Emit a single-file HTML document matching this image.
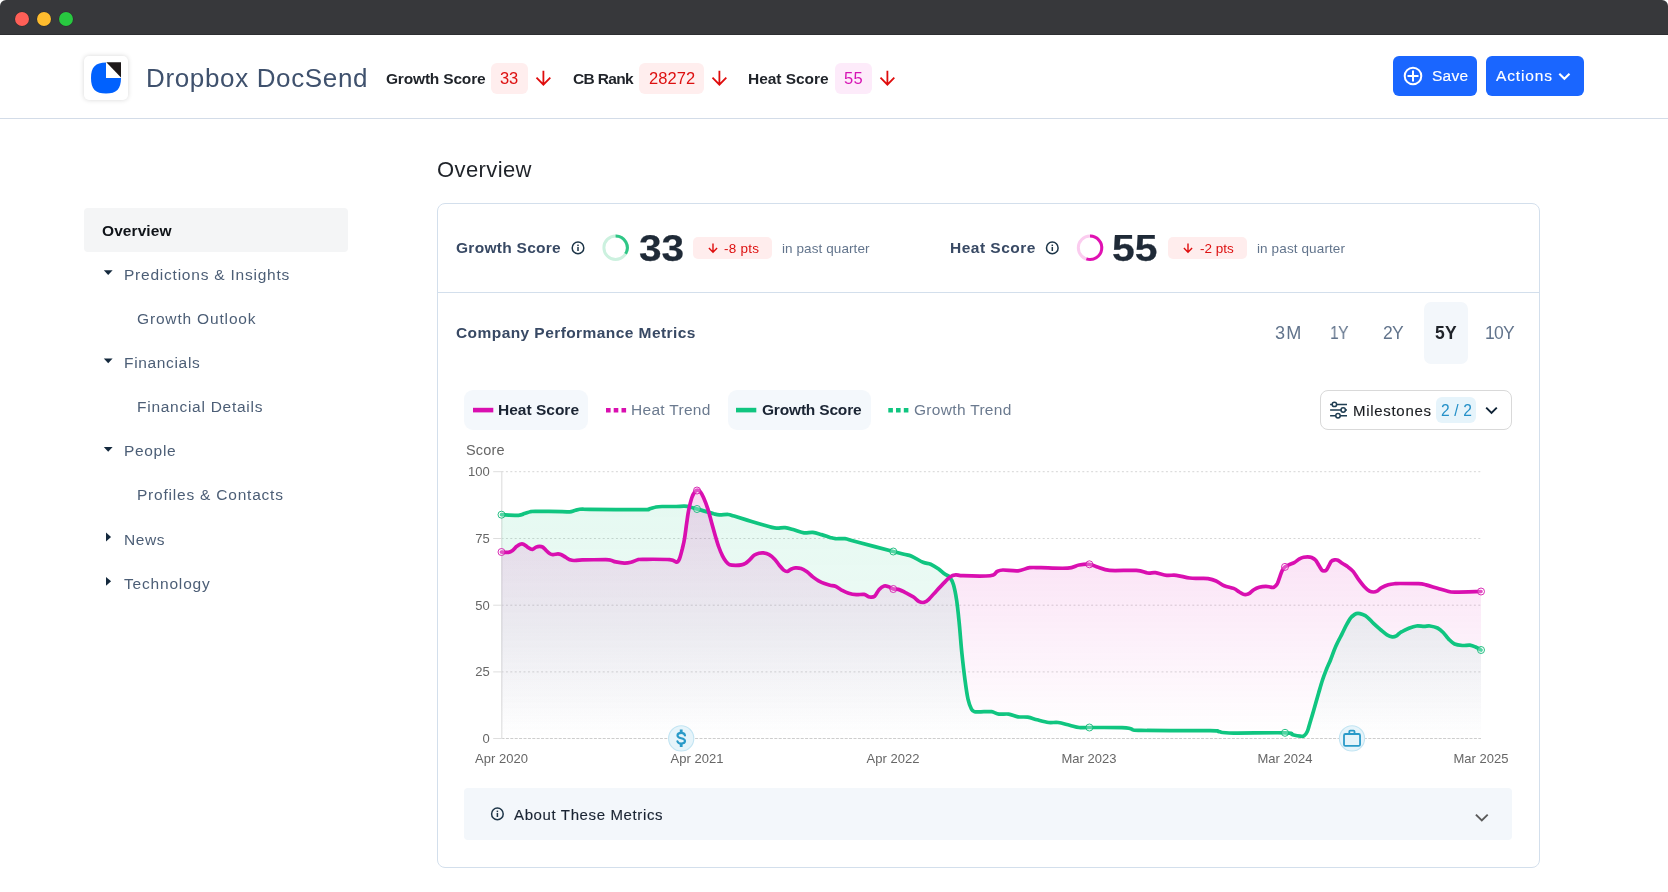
<!DOCTYPE html>
<html lang="en"><head><meta charset="utf-8"><title>Dropbox DocSend - Overview</title>
<style>
*{box-sizing:border-box;margin:0;padding:0}
html,body{width:1668px;height:892px;overflow:hidden;background:#fff}
body{position:relative;font-family:"Liberation Sans",sans-serif;color:#1f2329}
.abs{position:absolute}
.t{position:absolute;white-space:nowrap;font-family:"Liberation Sans",sans-serif;transform-origin:0 50%}
#titlebar{left:0;top:0;width:1668px;height:35px;background:#37383b;border-radius:6px 6px 0 0;border-bottom:1px solid #2d2e31}
.tl{width:14px;height:14px;border-radius:50%;top:11.5px;box-shadow:0 0 0 .5px rgba(0,0,0,.25)}
#hdrline{left:0;top:118px;width:1668px;height:1px;background:#d3dce8}
#logo{left:84px;top:56px;width:44px;height:44px;background:#fff;border-radius:5px;box-shadow:0 0 5px rgba(0,0,0,.16)}
.badge{border-radius:6px;height:31.4px;top:62.5px}
.btn{background:#1a66ff;border-radius:6px;top:56px;height:40px}
#navsel{left:84px;top:208px;width:264px;height:44px;background:#f4f5f6;border-radius:4px}
#card{left:437px;top:203px;width:1103px;height:665px;border:1px solid #d3dfec;border-radius:8px;background:#fff}
#carddiv{left:438px;top:292px;width:1101px;height:1px;background:#d3dfec}
.pts{background:#ffeded;border-radius:5px;top:237px;height:22px;width:79px}
#tabsel{left:1424px;top:302px;width:44px;height:62px;background:#f3f7fb;border-radius:7px}
.chip{background:#f4f8fc;border-radius:9px;top:390px;height:40px}
#miles{left:1320px;top:390px;width:192px;height:40px;border:1px solid #d9d9d9;border-radius:8px;background:#fff}
#mbadge{left:1436px;top:397px;width:40px;height:26px;background:#e6f4fb;border-radius:6px}
#about{left:464px;top:788px;width:1048px;height:52px;background:#f3f7fb;border-radius:4px}
svg{position:absolute;overflow:visible;will-change:transform}
svg.ov,#chart{left:0;top:0;pointer-events:none}
.t{will-change:transform}
</style></head>
<body>
<header>
<div class="abs" id="titlebar"></div>
<div class="abs tl" style="left:15px;background:#fe5f57"></div>
<div class="abs tl" style="left:37px;background:#febc2e"></div>
<div class="abs tl" style="left:59px;background:#28c840"></div>
<div class="abs" id="hdrline"></div>
<div class="abs" id="logo"></div>
<svg style="left:91px;top:62px" width="30" height="32" viewBox="0 0 30 32"><path d="M15 0.5 C4.5 0.5 0 5 0 16 C0 27 4.5 31.5 15 31.5 C25.5 31.5 30 27 30 16 L15 16 Z" fill="#0061fe"/><path d="M15.3 0.3 L30 0.3 L30 15.6 Z" fill="#1e1919"/></svg>
<div class="abs badge" style="left:491px;width:37px;background:#ffeeee"></div>
<div class="abs badge" style="left:639.3px;width:64.7px;background:#ffeeee"></div>
<div class="abs badge" style="left:835px;width:36.5px;background:#fdebfa"></div>
<div class="abs btn" style="left:1393px;width:84px"></div>
<div class="abs btn" style="left:1486px;width:98px"></div>
<svg class="ov" id="icons-header" width="1668" height="892" viewBox="0 0 1668 892" aria-hidden="true"><!-- header red arrows -->
<g fill="none" stroke="#df0c0c" stroke-width="1.8">
<path d="M543.4 70.7V84.6M536.5 77.6L543.4 84.6L550.3 77.6"/>
<path d="M719.4 70.7V84.6M712.5 77.6L719.4 84.6L726.3 77.6"/>
<path d="M887.4 70.7V84.6M880.5 77.6L887.4 84.6L894.3 77.6"/>
</g>
<!-- save plus-circle -->
<g fill="none" stroke="#fff" stroke-width="2">
<circle cx="1413" cy="76" r="8.3"/>
<path d="M1407.5 76H1418.5M1413 70.5V81.5"/>
<path d="M1559.3 73.8L1564.4 78.8L1569.5 73.8" stroke-width="2.1"/>
</g>
</svg>
<span class="t" id="t0" style="left:145.90px;top:62.19px;font-size:26px;line-height:32px;font-weight:400;color:#3f516d;letter-spacing:0.643px">Dropbox DocSend</span>
<span class="t" id="t1" style="left:386.00px;top:69.13px;font-size:15.5px;line-height:19px;font-weight:700;color:#1f2329;letter-spacing:-0.183px">Growth Score</span>
<span class="t" id="t2" style="left:500.40px;top:67.78px;font-size:16.5px;line-height:21px;font-weight:400;color:#dd1010;letter-spacing:-0.077px">33</span>
<span class="t" id="t3" style="left:573.00px;top:69.13px;font-size:15.5px;line-height:19px;font-weight:700;color:#1f2329;letter-spacing:-0.663px">CB Rank</span>
<span class="t" id="t4" style="left:648.70px;top:67.78px;font-size:16.5px;line-height:21px;font-weight:400;color:#dd1010;letter-spacing:0.048px">28272</span>
<span class="t" id="t5" style="left:748.00px;top:69.13px;font-size:15.5px;line-height:19px;font-weight:700;color:#1f2329;letter-spacing:-0.040px">Heat Score</span>
<span class="t" id="t6" style="left:844.00px;top:67.78px;font-size:16.5px;line-height:21px;font-weight:400;color:#d614b4;letter-spacing:0.323px">55</span>
<span class="t" id="t7" style="left:1431.80px;top:66.13px;font-size:15.5px;line-height:19px;font-weight:400;color:#ffffff;letter-spacing:0.264px;-webkit-text-stroke:0.15px #ffffff">Save</span>
<span class="t" id="t8" style="left:1496.00px;top:66.13px;font-size:15.5px;line-height:19px;font-weight:400;color:#ffffff;letter-spacing:0.853px;-webkit-text-stroke:0.15px #ffffff">Actions</span>
</header>
<nav>
<div class="abs" id="navsel"></div>
<svg class="ov" id="icons-nav" width="1668" height="892" viewBox="0 0 1668 892" aria-hidden="true"><!-- sidebar carets -->
<g fill="#14293d">
<path d="M103.8 270.2h8.8l-4.4 4.8z"/>
<path d="M103.8 358.5h8.8l-4.4 4.8z"/>
<path d="M103.8 446.9h8.8l-4.4 4.8z"/>
<path d="M106 532.6v8.8l5.1-4.4z"/>
<path d="M106 576.9v8.8l5.1-4.4z"/>
</g>
</svg>
<span class="t" id="t9" style="left:102.00px;top:220.93px;font-size:15.5px;line-height:19px;font-weight:700;color:#0f1318;letter-spacing:0.075px">Overview</span>
<span class="t" id="t10" style="left:124.00px;top:265.13px;font-size:15.5px;line-height:19px;font-weight:400;color:#4c5e76;letter-spacing:0.772px">Predictions &amp; Insights</span>
<span class="t" id="t11" style="left:137.20px;top:309.13px;font-size:15.5px;line-height:19px;font-weight:400;color:#4c5e76;letter-spacing:0.836px">Growth Outlook</span>
<span class="t" id="t12" style="left:124.00px;top:353.13px;font-size:15.5px;line-height:19px;font-weight:400;color:#4c5e76;letter-spacing:0.663px">Financials</span>
<span class="t" id="t13" style="left:136.80px;top:397.13px;font-size:15.5px;line-height:19px;font-weight:400;color:#4c5e76;letter-spacing:0.733px">Financial Details</span>
<span class="t" id="t14" style="left:124.00px;top:441.13px;font-size:15.5px;line-height:19px;font-weight:400;color:#4c5e76;letter-spacing:0.671px">People</span>
<span class="t" id="t15" style="left:136.80px;top:485.13px;font-size:15.5px;line-height:19px;font-weight:400;color:#4c5e76;letter-spacing:0.786px">Profiles &amp; Contacts</span>
<span class="t" id="t16" style="left:123.80px;top:529.63px;font-size:15.5px;line-height:19px;font-weight:400;color:#4c5e76;letter-spacing:0.564px">News</span>
<span class="t" id="t17" style="left:124.00px;top:573.63px;font-size:15.5px;line-height:19px;font-weight:400;color:#4c5e76;letter-spacing:0.815px">Technology</span>
</nav>
<main>
<span class="t" id="t18" style="left:436.80px;top:155.58px;font-size:22px;line-height:28px;font-weight:400;color:#1f2329;letter-spacing:0.400px">Overview</span>
<section>
<div class="abs" id="card"></div>
<div class="abs" id="carddiv"></div>
<div class="abs pts" style="left:693px"></div>
<div class="abs pts" style="left:1168px"></div>
<div class="abs" id="tabsel"></div>
<div class="abs chip" style="left:464px;width:124px"></div>
<div class="abs chip" style="left:728px;width:143px"></div>
<div class="abs" id="miles"></div>
<div class="abs" id="mbadge"></div>
<div class="abs" id="about"></div>
<svg id="chart" width="1668" height="892" viewBox="0 0 1668 892">
<defs>
<linearGradient id="gg" gradientUnits="userSpaceOnUse" x1="0" y1="500" x2="0" y2="738"><stop offset="0" stop-color="#0fc57e" stop-opacity=".108"/><stop offset=".55" stop-color="#0fc57e" stop-opacity=".076"/><stop offset="1" stop-color="#0fc57e" stop-opacity="0"/></linearGradient>
<linearGradient id="hg" gradientUnits="userSpaceOnUse" x1="0" y1="490" x2="0" y2="738"><stop offset="0" stop-color="#d80fae" stop-opacity=".155"/><stop offset="1" stop-color="#d80fae" stop-opacity="0"/></linearGradient>
</defs>
<line x1="501.5" y1="471.7" x2="1481" y2="471.7" stroke="#d6d6d6" stroke-width="1" stroke-dasharray="2 2.4"/>
<line x1="493.2" y1="471.7" x2="502.3" y2="471.7" stroke="#dedede" stroke-width="1"/>
<line x1="501.5" y1="538.5" x2="1481" y2="538.5" stroke="#d6d6d6" stroke-width="1" stroke-dasharray="2 2.4"/>
<line x1="493.2" y1="538.5" x2="502.3" y2="538.5" stroke="#dedede" stroke-width="1"/>
<line x1="501.5" y1="605.2" x2="1481" y2="605.2" stroke="#d6d6d6" stroke-width="1" stroke-dasharray="2 2.4"/>
<line x1="493.2" y1="605.2" x2="502.3" y2="605.2" stroke="#dedede" stroke-width="1"/>
<line x1="501.5" y1="671.9" x2="1481" y2="671.9" stroke="#d6d6d6" stroke-width="1" stroke-dasharray="2 2.4"/>
<line x1="493.2" y1="671.9" x2="502.3" y2="671.9" stroke="#dedede" stroke-width="1"/>
<line x1="501.5" y1="738.5" x2="1481" y2="738.5" stroke="#cdcdcd" stroke-width="1" stroke-dasharray="3 1.4"/>
<line x1="493.2" y1="738.5" x2="502.3" y2="738.5" stroke="#dedede" stroke-width="1"/>
<line x1="501.8" y1="471.2" x2="501.8" y2="739" stroke="#e0e0e0" stroke-width="1.2"/>
<path d="M501.5 514.7C504.3 514.8 514.7 515.5 518.5 515.3C522.3 515.1 522.4 514.2 524.4 513.6C526.4 513.0 528.5 512.1 530.3 511.7C532.1 511.3 530.0 511.3 535.3 511.3C540.6 511.3 556.4 511.5 562.1 511.6C567.8 511.7 567.5 512.0 569.7 511.8C572.0 511.6 573.5 510.7 575.6 510.2C577.7 509.7 580.1 509.1 582.3 509.0C584.5 508.9 578.9 509.3 589.0 509.4C599.1 509.5 632.6 509.8 642.7 509.7C652.8 509.6 647.2 509.3 649.4 508.9C651.6 508.4 653.9 507.4 656.1 507.0C658.4 506.6 659.5 506.6 662.9 506.5C666.3 506.4 672.7 506.6 676.3 506.5C679.9 506.4 682.3 506.1 684.6 506.2C686.9 506.3 687.9 506.5 690.0 507.0C692.1 507.5 693.5 508.0 697.5 509.1C701.5 510.2 710.0 512.8 713.7 513.8C717.4 514.8 717.1 514.8 719.5 514.9C721.9 515.0 725.9 514.3 728.3 514.5C730.7 514.7 730.2 514.9 734.1 516.1C738.0 517.3 745.3 519.6 751.6 521.5C757.9 523.4 767.6 526.3 772.0 527.4C776.4 528.5 775.6 528.1 777.8 528.1C780.0 528.1 782.4 527.3 785.1 527.6C787.8 527.9 790.7 528.9 793.9 529.8C797.1 530.7 801.0 532.4 804.1 532.8C807.2 533.2 809.9 532.1 812.8 532.4C815.7 532.7 818.7 533.8 821.6 534.6C824.5 535.4 827.7 536.7 830.0 537.4C832.3 538.1 832.9 538.5 835.4 538.7C837.9 538.9 841.4 538.2 844.9 538.7C848.4 539.2 848.2 539.7 856.3 541.8C864.4 543.9 885.3 549.4 893.3 551.5C901.2 553.6 901.0 553.5 904.0 554.3C907.0 555.1 908.4 554.9 911.6 556.2C914.8 557.5 919.8 561.0 923.0 562.3C926.2 563.6 928.2 563.1 930.7 564.2C933.2 565.3 935.9 567.1 938.3 568.8C940.6 570.4 942.9 572.7 944.8 574.1C946.7 575.5 948.2 575.4 949.7 577.2C951.2 579.0 952.4 581.0 953.5 584.8C954.6 588.6 955.6 593.6 956.6 600.0C957.6 606.4 958.3 614.0 959.2 622.9C960.1 631.8 960.9 643.9 961.9 653.4C962.9 662.9 964.0 672.5 965.0 680.1C966.0 687.7 966.9 694.3 968.0 699.1C969.1 703.9 970.3 706.9 971.4 709.0C972.5 711.1 972.4 711.2 974.5 711.7C976.6 712.2 981.1 711.7 984.0 711.7C986.9 711.7 989.1 711.3 991.6 711.7C994.1 712.1 996.2 713.7 999.0 714.1C1001.8 714.5 1005.4 713.7 1008.6 714.1C1011.8 714.5 1014.9 716.3 1018.1 716.8C1021.3 717.3 1024.5 716.7 1027.7 717.2C1030.9 717.7 1033.7 718.9 1037.2 719.8C1040.7 720.7 1045.1 722.0 1048.6 722.5C1052.1 723.0 1054.7 722.0 1058.2 722.5C1061.7 723.0 1066.1 724.4 1069.6 725.2C1073.1 726.0 1075.8 727.1 1079.1 727.5C1082.4 727.9 1082.2 727.5 1089.4 727.5C1096.6 727.5 1115.1 727.4 1122.0 727.6C1128.9 727.8 1127.8 728.3 1131.0 728.8C1134.2 729.3 1127.8 730.1 1141.0 730.4C1154.2 730.7 1197.0 730.4 1210.0 730.6C1223.0 730.8 1215.8 731.2 1219.0 731.6C1222.2 732.0 1218.0 732.8 1229.0 733.0C1240.0 733.2 1274.4 732.5 1285.0 732.8C1295.6 733.1 1290.0 734.1 1292.6 734.7C1295.1 735.3 1298.4 736.0 1300.3 736.2C1302.2 736.4 1302.9 736.6 1304.1 735.8C1305.3 735.0 1306.4 733.4 1307.3 731.5C1308.2 729.6 1308.5 727.8 1309.5 724.4C1310.5 721.0 1312.0 716.3 1313.5 711.0C1315.0 705.7 1317.2 698.0 1318.7 692.8C1320.2 687.6 1321.2 684.0 1322.5 680.0C1323.8 676.0 1325.3 672.3 1326.6 669.0C1327.9 665.7 1329.0 663.8 1330.5 660.0C1332.0 656.2 1333.9 650.6 1335.8 646.3C1337.7 642.0 1340.1 637.7 1341.9 634.1C1343.7 630.5 1345.1 627.4 1346.6 624.7C1348.0 622.0 1349.2 619.7 1350.6 618.0C1351.9 616.3 1353.5 615.2 1354.7 614.4C1355.9 613.6 1356.7 613.4 1358.0 613.4C1359.3 613.4 1361.1 614.0 1362.7 614.6C1364.3 615.2 1365.7 615.8 1367.5 617.3C1369.3 618.8 1371.4 621.4 1373.5 623.4C1375.6 625.4 1378.0 627.5 1380.2 629.4C1382.5 631.3 1385.0 633.6 1387.0 634.8C1389.0 636.0 1390.7 636.6 1392.3 636.8C1393.9 637.0 1395.1 636.5 1396.4 635.8C1397.7 635.1 1397.9 634.0 1400.0 632.8C1402.1 631.5 1406.2 629.4 1408.9 628.3C1411.7 627.2 1414.0 626.3 1416.5 626.0C1419.0 625.7 1421.9 626.4 1424.1 626.4C1426.3 626.4 1427.7 625.7 1429.9 626.0C1432.1 626.3 1435.3 626.9 1437.5 628.0C1439.7 629.1 1441.3 630.6 1443.2 632.5C1445.1 634.4 1447.0 637.5 1448.9 639.4C1450.8 641.3 1452.4 643.0 1454.6 644.0C1456.8 645.0 1459.8 645.3 1462.3 645.5C1464.8 645.7 1467.7 644.9 1469.9 645.1C1472.1 645.4 1473.8 646.2 1475.6 647.0C1477.4 647.8 1480.1 649.5 1481.0 650.0L1481 738L501.5 738Z" fill="url(#gg)"/>
<path d="M501.5 552.0C502.6 552.1 506.5 552.6 508.4 552.4C510.2 552.1 511.2 551.5 512.6 550.5C514.0 549.5 515.5 547.3 516.8 546.3C518.1 545.2 519.1 544.6 520.2 544.2C521.3 543.9 522.4 543.8 523.5 544.2C524.6 544.6 525.8 545.8 526.9 546.6C528.0 547.4 529.3 548.4 530.3 548.8C531.3 549.2 531.8 549.5 532.8 549.2C533.8 548.9 535.0 547.6 536.1 547.1C537.2 546.6 538.4 546.3 539.5 546.3C540.6 546.3 541.7 546.4 542.8 547.1C543.9 547.8 545.1 549.4 546.2 550.5C547.3 551.6 548.5 552.8 549.6 553.5C550.7 554.2 551.5 554.6 552.9 554.7C554.3 554.8 556.6 553.9 558.0 553.9C559.4 553.9 560.0 554.2 561.3 554.7C562.5 555.2 564.1 556.4 565.5 557.2C566.9 558.0 568.3 559.2 569.7 559.7C571.1 560.2 571.8 560.5 573.9 560.5C576.0 560.5 577.0 560.0 582.3 559.9C587.6 559.8 601.0 559.7 605.8 559.7C610.5 559.8 609.1 559.8 610.8 560.2C612.5 560.6 613.6 561.4 615.9 561.9C618.1 562.4 621.8 563.0 624.3 563.1C626.8 563.2 628.8 562.8 631.0 562.3C633.2 561.8 635.8 560.3 637.7 559.8C639.7 559.3 637.4 559.3 642.7 559.3C648.0 559.3 664.0 559.1 669.6 559.6C675.2 560.1 675.0 562.2 676.6 562.1C678.2 562.0 678.5 561.0 679.5 558.7C680.5 556.4 681.5 551.9 682.4 548.5C683.2 545.1 683.9 542.7 684.6 538.3C685.3 533.9 686.1 527.2 686.8 522.3C687.5 517.4 688.0 513.2 688.9 509.1C689.8 505.0 690.9 500.4 691.9 497.5C692.9 494.6 693.9 493.1 694.8 491.9C695.7 490.7 696.6 490.2 697.5 490.2C698.4 490.2 699.4 490.7 700.4 491.9C701.4 493.1 702.2 494.6 703.5 497.5C704.8 500.4 706.6 505.0 707.9 509.1C709.2 513.2 710.3 517.9 711.5 522.3C712.7 526.7 714.0 531.3 715.2 535.4C716.4 539.5 717.6 543.6 718.8 547.0C720.0 550.4 721.3 553.4 722.5 555.8C723.7 558.2 724.9 560.1 726.1 561.6C727.3 563.1 728.1 564.2 729.7 564.8C731.3 565.4 733.7 565.4 735.6 565.4C737.5 565.4 739.7 565.3 741.4 564.9C743.1 564.5 744.3 564.0 745.8 563.1C747.2 562.2 748.6 560.8 750.1 559.4C751.6 558.0 753.0 556.0 754.5 555.0C756.0 554.0 757.4 553.6 758.9 553.2C760.4 552.9 761.6 552.7 763.3 552.9C765.0 553.1 767.2 553.5 769.1 554.6C771.0 555.7 773.2 557.6 774.9 559.4C776.6 561.2 777.8 563.4 779.3 565.2C780.8 567.0 782.4 569.1 783.7 570.1C785.0 571.1 786.1 571.6 787.3 571.5C788.5 571.4 789.7 569.8 791.0 569.2C792.3 568.6 793.6 568.0 795.3 567.9C797.0 567.8 799.1 567.9 801.1 568.5C803.1 569.1 805.0 570.4 807.0 571.8C809.0 573.2 810.9 575.4 812.8 576.9C814.7 578.4 816.6 579.7 818.6 580.8C820.6 581.9 822.6 582.8 824.5 583.5C826.4 584.2 828.2 584.7 830.0 585.2C831.8 585.7 833.5 585.5 835.4 586.3C837.2 587.1 838.9 588.6 841.1 589.8C843.3 590.9 846.2 592.4 848.7 593.2C851.2 594.0 853.8 594.5 856.3 594.7C858.8 594.9 861.8 594.0 864.0 594.4C866.2 594.8 867.9 596.7 869.7 597.0C871.5 597.3 873.0 597.6 874.6 596.3C876.2 595.0 877.6 591.1 879.2 589.4C880.8 587.7 882.6 586.5 884.2 586.0C885.8 585.5 887.2 586.2 888.7 586.7C890.2 587.2 891.7 588.5 893.3 589.0C894.9 589.5 896.2 588.8 898.3 589.4C900.4 590.0 903.4 591.5 905.9 592.8C908.4 594.1 911.3 595.5 913.5 597.0C915.7 598.5 917.4 600.7 919.2 601.6C921.0 602.5 922.6 602.7 924.2 602.3C925.8 601.9 926.8 601.2 928.8 599.3C930.8 597.4 933.9 593.6 936.4 590.9C938.9 588.2 941.8 585.2 944.0 582.9C946.2 580.6 947.8 578.5 949.7 577.2C951.6 575.9 953.2 575.1 955.4 574.9C957.6 574.6 957.9 575.5 963.0 575.7C968.1 575.9 980.8 576.1 985.9 576.0C991.0 575.9 991.6 575.6 993.5 574.9C995.4 574.1 995.6 572.3 997.2 571.5C998.8 570.7 999.4 570.1 1002.9 570.0C1006.4 569.9 1013.7 571.2 1018.1 570.8C1022.5 570.4 1025.8 568.2 1029.6 567.7C1033.4 567.2 1034.7 567.6 1041.0 567.7C1047.3 567.8 1061.4 568.6 1067.7 568.1C1074.0 567.6 1075.5 565.6 1079.1 565.0C1082.7 564.4 1086.2 563.9 1089.4 564.3C1092.6 564.7 1094.8 566.3 1098.2 567.3C1101.6 568.3 1103.2 569.9 1109.6 570.4C1115.9 570.9 1129.9 570.0 1136.3 570.4C1142.7 570.8 1144.5 572.6 1147.7 573.0C1150.9 573.4 1152.2 572.3 1155.4 572.7C1158.6 573.1 1163.3 574.9 1166.8 575.3C1170.3 575.7 1172.5 574.8 1176.3 575.3C1180.1 575.8 1185.8 577.5 1189.7 578.0C1193.7 578.5 1196.9 578.2 1200.0 578.3C1203.1 578.4 1205.4 578.1 1208.1 578.6C1210.8 579.1 1213.4 579.8 1216.1 581.0C1218.8 582.2 1221.3 584.5 1224.2 585.7C1227.1 586.9 1231.1 587.4 1233.6 588.4C1236.1 589.4 1237.4 590.8 1239.0 591.8C1240.6 592.8 1241.8 593.6 1243.0 594.1C1244.2 594.6 1245.3 594.7 1246.4 594.5C1247.5 594.3 1248.6 593.9 1249.8 593.1C1251.0 592.3 1252.2 590.8 1253.8 589.8C1255.4 588.8 1257.2 587.9 1259.2 587.3C1261.2 586.7 1264.0 586.4 1265.9 586.4C1267.8 586.4 1269.3 587.0 1270.6 587.1C1271.9 587.2 1272.6 587.9 1273.7 587.3C1274.8 586.7 1276.2 585.5 1277.3 583.7C1278.3 581.9 1279.2 578.5 1280.0 576.3C1280.8 574.1 1281.5 571.9 1282.3 570.3C1283.1 568.7 1283.9 567.8 1285.0 566.9C1286.1 566.0 1287.3 565.6 1288.8 564.9C1290.3 564.2 1292.4 563.6 1294.2 562.6C1296.0 561.6 1297.9 559.7 1299.5 558.8C1301.1 557.9 1302.2 557.5 1303.6 557.2C1304.9 556.9 1306.3 556.8 1307.6 556.8C1308.9 556.8 1310.2 556.9 1311.6 557.5C1312.9 558.1 1314.5 558.9 1315.7 560.2C1316.9 561.6 1318.0 564.0 1319.0 565.6C1320.0 567.2 1320.9 569.0 1321.7 569.9C1322.5 570.8 1323.2 570.9 1324.0 570.9C1324.8 570.9 1325.6 570.8 1326.4 569.9C1327.2 569.0 1328.1 567.0 1328.9 565.6C1329.7 564.2 1330.2 562.5 1331.1 561.5C1332.0 560.5 1333.4 560.1 1334.5 559.9C1335.6 559.7 1336.6 559.6 1337.9 560.2C1339.2 560.8 1340.9 562.4 1342.6 563.5C1344.3 564.6 1346.2 565.5 1348.0 566.9C1349.8 568.2 1351.5 569.5 1353.3 571.6C1355.1 573.7 1356.9 577.2 1358.7 579.7C1360.5 582.2 1362.3 584.5 1364.1 586.4C1365.9 588.3 1367.9 590.2 1369.5 591.1C1371.1 592.0 1372.2 592.0 1373.5 592.0C1374.8 592.0 1376.2 591.5 1377.5 590.8C1378.8 590.1 1379.8 588.7 1381.6 587.7C1383.4 586.7 1386.1 585.5 1388.3 584.8C1390.5 584.1 1393.0 583.9 1395.0 583.7C1397.0 583.5 1396.1 583.5 1400.0 583.5C1403.9 583.5 1414.1 583.5 1418.4 583.7C1422.7 583.9 1422.8 584.1 1426.0 584.9C1429.2 585.7 1434.0 587.3 1437.5 588.3C1441.0 589.3 1444.2 590.4 1447.0 591.0C1449.8 591.6 1448.9 592.0 1454.6 592.1C1460.3 592.2 1476.6 591.6 1481.0 591.5L1481 738L501.5 738Z" fill="url(#hg)"/>
<path d="M501.5 514.7C504.3 514.8 514.7 515.5 518.5 515.3C522.3 515.1 522.4 514.2 524.4 513.6C526.4 513.0 528.5 512.1 530.3 511.7C532.1 511.3 530.0 511.3 535.3 511.3C540.6 511.3 556.4 511.5 562.1 511.6C567.8 511.7 567.5 512.0 569.7 511.8C572.0 511.6 573.5 510.7 575.6 510.2C577.7 509.7 580.1 509.1 582.3 509.0C584.5 508.9 578.9 509.3 589.0 509.4C599.1 509.5 632.6 509.8 642.7 509.7C652.8 509.6 647.2 509.3 649.4 508.9C651.6 508.4 653.9 507.4 656.1 507.0C658.4 506.6 659.5 506.6 662.9 506.5C666.3 506.4 672.7 506.6 676.3 506.5C679.9 506.4 682.3 506.1 684.6 506.2C686.9 506.3 687.9 506.5 690.0 507.0C692.1 507.5 693.5 508.0 697.5 509.1C701.5 510.2 710.0 512.8 713.7 513.8C717.4 514.8 717.1 514.8 719.5 514.9C721.9 515.0 725.9 514.3 728.3 514.5C730.7 514.7 730.2 514.9 734.1 516.1C738.0 517.3 745.3 519.6 751.6 521.5C757.9 523.4 767.6 526.3 772.0 527.4C776.4 528.5 775.6 528.1 777.8 528.1C780.0 528.1 782.4 527.3 785.1 527.6C787.8 527.9 790.7 528.9 793.9 529.8C797.1 530.7 801.0 532.4 804.1 532.8C807.2 533.2 809.9 532.1 812.8 532.4C815.7 532.7 818.7 533.8 821.6 534.6C824.5 535.4 827.7 536.7 830.0 537.4C832.3 538.1 832.9 538.5 835.4 538.7C837.9 538.9 841.4 538.2 844.9 538.7C848.4 539.2 848.2 539.7 856.3 541.8C864.4 543.9 885.3 549.4 893.3 551.5C901.2 553.6 901.0 553.5 904.0 554.3C907.0 555.1 908.4 554.9 911.6 556.2C914.8 557.5 919.8 561.0 923.0 562.3C926.2 563.6 928.2 563.1 930.7 564.2C933.2 565.3 935.9 567.1 938.3 568.8C940.6 570.4 942.9 572.7 944.8 574.1C946.7 575.5 948.2 575.4 949.7 577.2C951.2 579.0 952.4 581.0 953.5 584.8C954.6 588.6 955.6 593.6 956.6 600.0C957.6 606.4 958.3 614.0 959.2 622.9C960.1 631.8 960.9 643.9 961.9 653.4C962.9 662.9 964.0 672.5 965.0 680.1C966.0 687.7 966.9 694.3 968.0 699.1C969.1 703.9 970.3 706.9 971.4 709.0C972.5 711.1 972.4 711.2 974.5 711.7C976.6 712.2 981.1 711.7 984.0 711.7C986.9 711.7 989.1 711.3 991.6 711.7C994.1 712.1 996.2 713.7 999.0 714.1C1001.8 714.5 1005.4 713.7 1008.6 714.1C1011.8 714.5 1014.9 716.3 1018.1 716.8C1021.3 717.3 1024.5 716.7 1027.7 717.2C1030.9 717.7 1033.7 718.9 1037.2 719.8C1040.7 720.7 1045.1 722.0 1048.6 722.5C1052.1 723.0 1054.7 722.0 1058.2 722.5C1061.7 723.0 1066.1 724.4 1069.6 725.2C1073.1 726.0 1075.8 727.1 1079.1 727.5C1082.4 727.9 1082.2 727.5 1089.4 727.5C1096.6 727.5 1115.1 727.4 1122.0 727.6C1128.9 727.8 1127.8 728.3 1131.0 728.8C1134.2 729.3 1127.8 730.1 1141.0 730.4C1154.2 730.7 1197.0 730.4 1210.0 730.6C1223.0 730.8 1215.8 731.2 1219.0 731.6C1222.2 732.0 1218.0 732.8 1229.0 733.0C1240.0 733.2 1274.4 732.5 1285.0 732.8C1295.6 733.1 1290.0 734.1 1292.6 734.7C1295.1 735.3 1298.4 736.0 1300.3 736.2C1302.2 736.4 1302.9 736.6 1304.1 735.8C1305.3 735.0 1306.4 733.4 1307.3 731.5C1308.2 729.6 1308.5 727.8 1309.5 724.4C1310.5 721.0 1312.0 716.3 1313.5 711.0C1315.0 705.7 1317.2 698.0 1318.7 692.8C1320.2 687.6 1321.2 684.0 1322.5 680.0C1323.8 676.0 1325.3 672.3 1326.6 669.0C1327.9 665.7 1329.0 663.8 1330.5 660.0C1332.0 656.2 1333.9 650.6 1335.8 646.3C1337.7 642.0 1340.1 637.7 1341.9 634.1C1343.7 630.5 1345.1 627.4 1346.6 624.7C1348.0 622.0 1349.2 619.7 1350.6 618.0C1351.9 616.3 1353.5 615.2 1354.7 614.4C1355.9 613.6 1356.7 613.4 1358.0 613.4C1359.3 613.4 1361.1 614.0 1362.7 614.6C1364.3 615.2 1365.7 615.8 1367.5 617.3C1369.3 618.8 1371.4 621.4 1373.5 623.4C1375.6 625.4 1378.0 627.5 1380.2 629.4C1382.5 631.3 1385.0 633.6 1387.0 634.8C1389.0 636.0 1390.7 636.6 1392.3 636.8C1393.9 637.0 1395.1 636.5 1396.4 635.8C1397.7 635.1 1397.9 634.0 1400.0 632.8C1402.1 631.5 1406.2 629.4 1408.9 628.3C1411.7 627.2 1414.0 626.3 1416.5 626.0C1419.0 625.7 1421.9 626.4 1424.1 626.4C1426.3 626.4 1427.7 625.7 1429.9 626.0C1432.1 626.3 1435.3 626.9 1437.5 628.0C1439.7 629.1 1441.3 630.6 1443.2 632.5C1445.1 634.4 1447.0 637.5 1448.9 639.4C1450.8 641.3 1452.4 643.0 1454.6 644.0C1456.8 645.0 1459.8 645.3 1462.3 645.5C1464.8 645.7 1467.7 644.9 1469.9 645.1C1472.1 645.4 1473.8 646.2 1475.6 647.0C1477.4 647.8 1480.1 649.5 1481.0 650.0" fill="none" stroke="#10c580" stroke-width="3.7" stroke-linejoin="round" stroke-linecap="round"/>
<path d="M501.5 552.0C502.6 552.1 506.5 552.6 508.4 552.4C510.2 552.1 511.2 551.5 512.6 550.5C514.0 549.5 515.5 547.3 516.8 546.3C518.1 545.2 519.1 544.6 520.2 544.2C521.3 543.9 522.4 543.8 523.5 544.2C524.6 544.6 525.8 545.8 526.9 546.6C528.0 547.4 529.3 548.4 530.3 548.8C531.3 549.2 531.8 549.5 532.8 549.2C533.8 548.9 535.0 547.6 536.1 547.1C537.2 546.6 538.4 546.3 539.5 546.3C540.6 546.3 541.7 546.4 542.8 547.1C543.9 547.8 545.1 549.4 546.2 550.5C547.3 551.6 548.5 552.8 549.6 553.5C550.7 554.2 551.5 554.6 552.9 554.7C554.3 554.8 556.6 553.9 558.0 553.9C559.4 553.9 560.0 554.2 561.3 554.7C562.5 555.2 564.1 556.4 565.5 557.2C566.9 558.0 568.3 559.2 569.7 559.7C571.1 560.2 571.8 560.5 573.9 560.5C576.0 560.5 577.0 560.0 582.3 559.9C587.6 559.8 601.0 559.7 605.8 559.7C610.5 559.8 609.1 559.8 610.8 560.2C612.5 560.6 613.6 561.4 615.9 561.9C618.1 562.4 621.8 563.0 624.3 563.1C626.8 563.2 628.8 562.8 631.0 562.3C633.2 561.8 635.8 560.3 637.7 559.8C639.7 559.3 637.4 559.3 642.7 559.3C648.0 559.3 664.0 559.1 669.6 559.6C675.2 560.1 675.0 562.2 676.6 562.1C678.2 562.0 678.5 561.0 679.5 558.7C680.5 556.4 681.5 551.9 682.4 548.5C683.2 545.1 683.9 542.7 684.6 538.3C685.3 533.9 686.1 527.2 686.8 522.3C687.5 517.4 688.0 513.2 688.9 509.1C689.8 505.0 690.9 500.4 691.9 497.5C692.9 494.6 693.9 493.1 694.8 491.9C695.7 490.7 696.6 490.2 697.5 490.2C698.4 490.2 699.4 490.7 700.4 491.9C701.4 493.1 702.2 494.6 703.5 497.5C704.8 500.4 706.6 505.0 707.9 509.1C709.2 513.2 710.3 517.9 711.5 522.3C712.7 526.7 714.0 531.3 715.2 535.4C716.4 539.5 717.6 543.6 718.8 547.0C720.0 550.4 721.3 553.4 722.5 555.8C723.7 558.2 724.9 560.1 726.1 561.6C727.3 563.1 728.1 564.2 729.7 564.8C731.3 565.4 733.7 565.4 735.6 565.4C737.5 565.4 739.7 565.3 741.4 564.9C743.1 564.5 744.3 564.0 745.8 563.1C747.2 562.2 748.6 560.8 750.1 559.4C751.6 558.0 753.0 556.0 754.5 555.0C756.0 554.0 757.4 553.6 758.9 553.2C760.4 552.9 761.6 552.7 763.3 552.9C765.0 553.1 767.2 553.5 769.1 554.6C771.0 555.7 773.2 557.6 774.9 559.4C776.6 561.2 777.8 563.4 779.3 565.2C780.8 567.0 782.4 569.1 783.7 570.1C785.0 571.1 786.1 571.6 787.3 571.5C788.5 571.4 789.7 569.8 791.0 569.2C792.3 568.6 793.6 568.0 795.3 567.9C797.0 567.8 799.1 567.9 801.1 568.5C803.1 569.1 805.0 570.4 807.0 571.8C809.0 573.2 810.9 575.4 812.8 576.9C814.7 578.4 816.6 579.7 818.6 580.8C820.6 581.9 822.6 582.8 824.5 583.5C826.4 584.2 828.2 584.7 830.0 585.2C831.8 585.7 833.5 585.5 835.4 586.3C837.2 587.1 838.9 588.6 841.1 589.8C843.3 590.9 846.2 592.4 848.7 593.2C851.2 594.0 853.8 594.5 856.3 594.7C858.8 594.9 861.8 594.0 864.0 594.4C866.2 594.8 867.9 596.7 869.7 597.0C871.5 597.3 873.0 597.6 874.6 596.3C876.2 595.0 877.6 591.1 879.2 589.4C880.8 587.7 882.6 586.5 884.2 586.0C885.8 585.5 887.2 586.2 888.7 586.7C890.2 587.2 891.7 588.5 893.3 589.0C894.9 589.5 896.2 588.8 898.3 589.4C900.4 590.0 903.4 591.5 905.9 592.8C908.4 594.1 911.3 595.5 913.5 597.0C915.7 598.5 917.4 600.7 919.2 601.6C921.0 602.5 922.6 602.7 924.2 602.3C925.8 601.9 926.8 601.2 928.8 599.3C930.8 597.4 933.9 593.6 936.4 590.9C938.9 588.2 941.8 585.2 944.0 582.9C946.2 580.6 947.8 578.5 949.7 577.2C951.6 575.9 953.2 575.1 955.4 574.9C957.6 574.6 957.9 575.5 963.0 575.7C968.1 575.9 980.8 576.1 985.9 576.0C991.0 575.9 991.6 575.6 993.5 574.9C995.4 574.1 995.6 572.3 997.2 571.5C998.8 570.7 999.4 570.1 1002.9 570.0C1006.4 569.9 1013.7 571.2 1018.1 570.8C1022.5 570.4 1025.8 568.2 1029.6 567.7C1033.4 567.2 1034.7 567.6 1041.0 567.7C1047.3 567.8 1061.4 568.6 1067.7 568.1C1074.0 567.6 1075.5 565.6 1079.1 565.0C1082.7 564.4 1086.2 563.9 1089.4 564.3C1092.6 564.7 1094.8 566.3 1098.2 567.3C1101.6 568.3 1103.2 569.9 1109.6 570.4C1115.9 570.9 1129.9 570.0 1136.3 570.4C1142.7 570.8 1144.5 572.6 1147.7 573.0C1150.9 573.4 1152.2 572.3 1155.4 572.7C1158.6 573.1 1163.3 574.9 1166.8 575.3C1170.3 575.7 1172.5 574.8 1176.3 575.3C1180.1 575.8 1185.8 577.5 1189.7 578.0C1193.7 578.5 1196.9 578.2 1200.0 578.3C1203.1 578.4 1205.4 578.1 1208.1 578.6C1210.8 579.1 1213.4 579.8 1216.1 581.0C1218.8 582.2 1221.3 584.5 1224.2 585.7C1227.1 586.9 1231.1 587.4 1233.6 588.4C1236.1 589.4 1237.4 590.8 1239.0 591.8C1240.6 592.8 1241.8 593.6 1243.0 594.1C1244.2 594.6 1245.3 594.7 1246.4 594.5C1247.5 594.3 1248.6 593.9 1249.8 593.1C1251.0 592.3 1252.2 590.8 1253.8 589.8C1255.4 588.8 1257.2 587.9 1259.2 587.3C1261.2 586.7 1264.0 586.4 1265.9 586.4C1267.8 586.4 1269.3 587.0 1270.6 587.1C1271.9 587.2 1272.6 587.9 1273.7 587.3C1274.8 586.7 1276.2 585.5 1277.3 583.7C1278.3 581.9 1279.2 578.5 1280.0 576.3C1280.8 574.1 1281.5 571.9 1282.3 570.3C1283.1 568.7 1283.9 567.8 1285.0 566.9C1286.1 566.0 1287.3 565.6 1288.8 564.9C1290.3 564.2 1292.4 563.6 1294.2 562.6C1296.0 561.6 1297.9 559.7 1299.5 558.8C1301.1 557.9 1302.2 557.5 1303.6 557.2C1304.9 556.9 1306.3 556.8 1307.6 556.8C1308.9 556.8 1310.2 556.9 1311.6 557.5C1312.9 558.1 1314.5 558.9 1315.7 560.2C1316.9 561.6 1318.0 564.0 1319.0 565.6C1320.0 567.2 1320.9 569.0 1321.7 569.9C1322.5 570.8 1323.2 570.9 1324.0 570.9C1324.8 570.9 1325.6 570.8 1326.4 569.9C1327.2 569.0 1328.1 567.0 1328.9 565.6C1329.7 564.2 1330.2 562.5 1331.1 561.5C1332.0 560.5 1333.4 560.1 1334.5 559.9C1335.6 559.7 1336.6 559.6 1337.9 560.2C1339.2 560.8 1340.9 562.4 1342.6 563.5C1344.3 564.6 1346.2 565.5 1348.0 566.9C1349.8 568.2 1351.5 569.5 1353.3 571.6C1355.1 573.7 1356.9 577.2 1358.7 579.7C1360.5 582.2 1362.3 584.5 1364.1 586.4C1365.9 588.3 1367.9 590.2 1369.5 591.1C1371.1 592.0 1372.2 592.0 1373.5 592.0C1374.8 592.0 1376.2 591.5 1377.5 590.8C1378.8 590.1 1379.8 588.7 1381.6 587.7C1383.4 586.7 1386.1 585.5 1388.3 584.8C1390.5 584.1 1393.0 583.9 1395.0 583.7C1397.0 583.5 1396.1 583.5 1400.0 583.5C1403.9 583.5 1414.1 583.5 1418.4 583.7C1422.7 583.9 1422.8 584.1 1426.0 584.9C1429.2 585.7 1434.0 587.3 1437.5 588.3C1441.0 589.3 1444.2 590.4 1447.0 591.0C1449.8 591.6 1448.9 592.0 1454.6 592.1C1460.3 592.2 1476.6 591.6 1481.0 591.5" fill="none" stroke="#d90fb0" stroke-width="3.7" stroke-linejoin="round" stroke-linecap="round"/>
<circle cx="501.5" cy="514.7" r="3.5" fill="rgba(255,255,255,.28)" stroke="#12b877" stroke-width="0.9"/>
<circle cx="501.5" cy="552.0" r="3.5" fill="rgba(255,255,255,.28)" stroke="#d418ad" stroke-width="0.9"/>
<circle cx="697" cy="509.0" r="3.5" fill="rgba(255,255,255,.28)" stroke="#12b877" stroke-width="0.9"/>
<circle cx="697" cy="490.5" r="3.5" fill="rgba(255,255,255,.28)" stroke="#d418ad" stroke-width="0.9"/>
<circle cx="893.3" cy="551.5" r="3.5" fill="rgba(255,255,255,.28)" stroke="#12b877" stroke-width="0.9"/>
<circle cx="893.3" cy="589.0" r="3.5" fill="rgba(255,255,255,.28)" stroke="#d418ad" stroke-width="0.9"/>
<circle cx="1089.4" cy="727.5" r="3.5" fill="rgba(255,255,255,.28)" stroke="#12b877" stroke-width="0.9"/>
<circle cx="1089.4" cy="564.3" r="3.5" fill="rgba(255,255,255,.28)" stroke="#d418ad" stroke-width="0.9"/>
<circle cx="1285" cy="732.8" r="3.5" fill="rgba(255,255,255,.28)" stroke="#12b877" stroke-width="0.9"/>
<circle cx="1285" cy="566.9" r="3.5" fill="rgba(255,255,255,.28)" stroke="#d418ad" stroke-width="0.9"/>
<circle cx="1481" cy="650.0" r="3.5" fill="rgba(255,255,255,.28)" stroke="#12b877" stroke-width="0.9"/>
<circle cx="1481" cy="591.5" r="3.5" fill="rgba(255,255,255,.28)" stroke="#d418ad" stroke-width="0.9"/>
<circle cx="681.2" cy="738.4" r="12.6" fill="#e6f4fa" stroke="#c3e5f3" stroke-width="1.1"/>
<path d="M685 735.4C684.6 733.8 683.2 732.9 681.2 732.9C679 732.9 677.5 734 677.5 735.6C677.5 737.3 679 737.8 681.2 738.3C683.5 738.8 685 739.4 685 741.1C685 742.7 683.4 743.6 681.2 743.6C679.2 743.6 677.8 742.8 677.4 741.3" fill="none" stroke="#2a9ac8" stroke-width="2.15" stroke-linecap="round"/>
<path d="M679.8 729.6h2.8v2.8h-2.8zM679.8 744.1h2.8v2.8h-2.8z" fill="#2a9ac8"/>
<circle cx="1352" cy="738.4" r="12.6" fill="#e6f4fa" stroke="#c3e5f3" stroke-width="1.1"/>
<g fill="none" stroke="#2a9ac8" stroke-width="1.8" stroke-linejoin="round"><rect x="1344" y="734" width="16.05" height="11.9" rx="1.4"/><path d="M1349.3 734v-2.4a1 1 0 0 1 1-1h3.2a1 1 0 0 1 1 1v2.4"/></g>
<text x="489.8" y="476.2" text-anchor="end" font-family="Liberation Sans, sans-serif" font-size="13" fill="#666">100</text>
<text x="489.8" y="543" text-anchor="end" font-family="Liberation Sans, sans-serif" font-size="13" fill="#666">75</text>
<text x="489.8" y="609.7" text-anchor="end" font-family="Liberation Sans, sans-serif" font-size="13" fill="#666">50</text>
<text x="489.8" y="676.4" text-anchor="end" font-family="Liberation Sans, sans-serif" font-size="13" fill="#666">25</text>
<text x="489.8" y="743" text-anchor="end" font-family="Liberation Sans, sans-serif" font-size="13" fill="#666">0</text>
<text x="501.5" y="762.7" text-anchor="middle" font-family="Liberation Sans, sans-serif" font-size="13" fill="#666">Apr 2020</text>
<text x="697" y="762.7" text-anchor="middle" font-family="Liberation Sans, sans-serif" font-size="13" fill="#666">Apr 2021</text>
<text x="893" y="762.7" text-anchor="middle" font-family="Liberation Sans, sans-serif" font-size="13" fill="#666">Apr 2022</text>
<text x="1089" y="762.7" text-anchor="middle" font-family="Liberation Sans, sans-serif" font-size="13" fill="#666">Mar 2023</text>
<text x="1285" y="762.7" text-anchor="middle" font-family="Liberation Sans, sans-serif" font-size="13" fill="#666">Mar 2024</text>
<text x="1481" y="762.7" text-anchor="middle" font-family="Liberation Sans, sans-serif" font-size="13" fill="#666">Mar 2025</text>
</svg>
<svg class="ov" id="icons-main" width="1668" height="892" viewBox="0 0 1668 892" aria-hidden="true"><!-- info icons -->
<g fill="none" stroke="#1d3548" stroke-width="1.5">
<circle cx="578" cy="247.9" r="5.8"/>
<circle cx="1052.3" cy="247.9" r="5.8"/>
<circle cx="497.4" cy="813.9" r="5.8"/>
</g>
<g fill="#1d3548">
<rect x="577.25" y="247" width="1.5" height="4"/><rect x="577.25" y="244.6" width="1.5" height="1.5"/>
<rect x="1051.55" y="247" width="1.5" height="4"/><rect x="1051.55" y="244.6" width="1.5" height="1.5"/>
<rect x="496.65" y="813" width="1.5" height="4"/><rect x="496.65" y="810.6" width="1.5" height="1.5"/>
</g>
<!-- score rings -->
<circle cx="615.6" cy="247.7" r="11.7" fill="none" stroke="#ccf1df" stroke-width="3"/>
<path d="M615.6 236A11.7 11.7 0 0 1 625.6 253.8" fill="none" stroke="#2fc686" stroke-width="3"/>
<circle cx="1090" cy="247.8" r="11.7" fill="none" stroke="#fbccef" stroke-width="3"/>
<path d="M1090 236.1A11.7 11.7 0 1 1 1086.4 258.9" fill="none" stroke="#e011b2" stroke-width="3"/>
<!-- small pts arrows -->
<g fill="none" stroke="#df0c0c" stroke-width="1.4">
<path d="M713 243.6V252.2M708.9 248.1L713 252.2L717.1 248.1"/>
<path d="M1188 243.6V252.2M1183.9 248.1L1188 252.2L1192.1 248.1"/>
</g>
<!-- legend swatches -->
<rect x="473" y="407.8" width="20.3" height="4.6" fill="#d90fb0"/>
<g fill="#d90fb0"><rect x="606" y="408" width="4.6" height="4.5"/><rect x="613.7" y="408" width="4.6" height="4.5"/><rect x="621.5" y="408" width="4.6" height="4.5"/></g>
<rect x="736" y="407.8" width="20.3" height="4.6" fill="#10c580"/>
<g fill="#10c580"><rect x="888.3" y="408" width="4.6" height="4.5"/><rect x="896" y="408" width="4.6" height="4.5"/><rect x="903.8" y="408" width="4.6" height="4.5"/></g>
<!-- milestones filter icon -->
<g fill="none" stroke="#1f3d52" stroke-width="1.5">
<path d="M1330.1 404.4H1347M1330.1 410H1347M1330.1 415.7H1347"/>
<circle cx="1334.4" cy="404.4" r="2.2" fill="#fff"/><circle cx="1343.2" cy="410" r="2.2" fill="#fff"/><circle cx="1338" cy="415.7" r="2.2" fill="#fff"/>
</g>
<path d="M1486.2 407.6L1491.5 412.9L1496.8 407.6" fill="none" stroke="#0e2235" stroke-width="1.9"/>
<!-- about chevron -->
<path d="M1475.9 814.6L1481.8 820.5L1487.7 814.6" fill="none" stroke="#5a5a5a" stroke-width="1.9"/>
</svg>
<span class="t" id="t19" style="left:456.30px;top:238.13px;font-size:15.5px;line-height:19px;font-weight:700;color:#384964;letter-spacing:0.281px">Growth Score</span>
<span class="t" id="t20" style="left:638.80px;top:225.63px;font-size:36px;line-height:45px;font-weight:700;color:#1f2a37;letter-spacing:0.000px;transform:scaleX(1.1276);-webkit-text-stroke:0.25px #1f2a37">33</span>
<span class="t" id="t21" style="left:724.00px;top:239.82px;font-size:13.5px;line-height:17px;font-weight:400;color:#dd1010;letter-spacing:0.257px">-8 pts</span>
<span class="t" id="t22" style="left:782.00px;top:239.82px;font-size:13.5px;line-height:17px;font-weight:400;color:#62748c;letter-spacing:0.085px">in past quarter</span>
<span class="t" id="t23" style="left:950.00px;top:238.13px;font-size:15.5px;line-height:19px;font-weight:700;color:#384964;letter-spacing:0.493px">Heat Score</span>
<span class="t" id="t24" style="left:1112.36px;top:225.63px;font-size:36px;line-height:45px;font-weight:700;color:#1f2a37;letter-spacing:0.000px;transform:scaleX(1.1353);-webkit-text-stroke:0.25px #1f2a37">55</span>
<span class="t" id="t25" style="left:1200.00px;top:239.82px;font-size:13.5px;line-height:17px;font-weight:400;color:#dd1010;letter-spacing:0.017px">-2 pts</span>
<span class="t" id="t26" style="left:1257.00px;top:239.82px;font-size:13.5px;line-height:17px;font-weight:400;color:#62748c;letter-spacing:0.121px">in past quarter</span>
<span class="t" id="t27" style="left:456.20px;top:323.13px;font-size:15.5px;line-height:19px;font-weight:700;color:#384964;letter-spacing:0.429px">Company Performance Metrics</span>
<span class="t" id="t28" style="left:1274.70px;top:321.94px;font-size:17.5px;line-height:22px;font-weight:400;color:#62748c;letter-spacing:1.225px;transform:scaleX(1.0338)">3M</span>
<span class="t" id="t29" style="left:1330.40px;top:321.94px;font-size:17.5px;line-height:22px;font-weight:400;color:#62748c;letter-spacing:-0.787px;transform:scaleX(0.8975)">1Y</span>
<span class="t" id="t30" style="left:1382.70px;top:321.94px;font-size:17.5px;line-height:22px;font-weight:400;color:#62748c;letter-spacing:-0.787px;transform:scaleX(0.9883)">2Y</span>
<span class="t" id="t31" style="left:1434.60px;top:321.94px;font-size:17.5px;line-height:22px;font-weight:700;color:#1f2329;letter-spacing:0.267px">5Y</span>
<span class="t" id="t32" style="left:1485.40px;top:321.94px;font-size:17.5px;line-height:22px;font-weight:400;color:#62748c;letter-spacing:-0.787px">10Y</span>
<span class="t" id="t33" style="left:497.70px;top:400.13px;font-size:15.5px;line-height:19px;font-weight:700;color:#1a2433;letter-spacing:0.004px">Heat Score</span>
<span class="t" id="t34" style="left:630.50px;top:400.13px;font-size:15.5px;line-height:19px;font-weight:400;color:#6b7a8f;letter-spacing:0.295px">Heat Trend</span>
<span class="t" id="t35" style="left:761.50px;top:400.13px;font-size:15.5px;line-height:19px;font-weight:700;color:#1a2433;letter-spacing:-0.183px">Growth Score</span>
<span class="t" id="t36" style="left:913.50px;top:400.13px;font-size:15.5px;line-height:19px;font-weight:400;color:#6b7a8f;letter-spacing:0.313px">Growth Trend</span>
<span class="t" id="t37" style="left:1352.80px;top:400.80px;font-size:15px;line-height:19px;font-weight:400;color:#1a1d21;letter-spacing:0.700px;-webkit-text-stroke:0.15px #1a1d21">Milestones</span>
<span class="t" id="t38" style="left:1440.80px;top:400.89px;font-size:15.6px;line-height:20px;font-weight:400;color:#2490c8;letter-spacing:0.158px">2 / 2</span>
<span class="t" id="t39" style="left:465.50px;top:440.98px;font-size:14.5px;line-height:18px;font-weight:400;color:#666666;letter-spacing:0.171px">Score</span>
<span class="t" id="t40" style="left:514.00px;top:804.50px;font-size:15px;line-height:19px;font-weight:400;color:#1a2433;letter-spacing:0.625px;-webkit-text-stroke:0.15px #1a2433">About These Metrics</span>
</section>
</main>
</body></html>
